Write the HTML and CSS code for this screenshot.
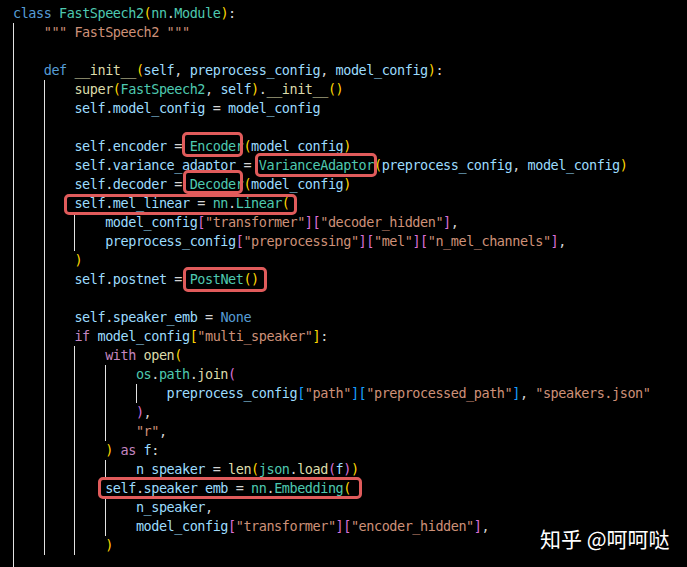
FILE: index.html
```html
<!DOCTYPE html>
<html lang="zh">
<head>
<meta charset="utf-8">
<title>FastSpeech2</title>
<link rel="stylesheet" href="styles.css">
</head>
<body>
<div class="editor">
<div class="ln"><span class="k">class</span> <span class="t">FastSpeech2</span><span class="y">(</span><span class="t">nn</span>.<span class="t">Module</span><span class="y">)</span>:</div>
<div class="ln"><span class="g">    </span><span class="s">""" FastSpeech2 """</span></div>
<div class="ln"><span class="g">    </span></div>
<div class="ln"><span class="g">    </span><span class="k">def</span> <span class="f">__init__</span><span class="y">(</span><span class="v">self</span>, <span class="v">preprocess_config</span>, <span class="v">model_config</span><span class="y">)</span>:</div>
<div class="ln"><span class="g">    </span><span class="g">    </span><span class="f">super</span><span class="y">(</span><span class="t">FastSpeech2</span>, <span class="v">self</span><span class="y">)</span>.<span class="f">__init__</span><span class="y">()</span></div>
<div class="ln"><span class="g">    </span><span class="g">    </span><span class="v">self</span>.<span class="v">model_config</span> = <span class="v">model_config</span></div>
<div class="ln"><span class="g">    </span><span class="g">    </span></div>
<div class="ln"><span class="g">    </span><span class="g">    </span><span class="v">self</span>.<span class="v">encoder</span> = <span class="t">Encoder</span><span class="y">(</span><span class="v">model_config</span><span class="y">)</span></div>
<div class="ln"><span class="g">    </span><span class="g">    </span><span class="v">self</span>.<span class="v">variance_adaptor</span> = <span class="t">VarianceAdaptor</span><span class="y">(</span><span class="v">preprocess_config</span>, <span class="v">model_config</span><span class="y">)</span></div>
<div class="ln"><span class="g">    </span><span class="g">    </span><span class="v">self</span>.<span class="v">decoder</span> = <span class="t">Decoder</span><span class="y">(</span><span class="v">model_config</span><span class="y">)</span></div>
<div class="ln"><span class="g">    </span><span class="g">    </span><span class="v">self</span>.<span class="v">mel_linear</span> = <span class="t">nn</span>.<span class="t">Linear</span><span class="y">(</span></div>
<div class="ln"><span class="g">    </span><span class="g">    </span><span class="g">    </span><span class="v">model_config</span><span class="p">[</span><span class="s">"transformer"</span><span class="p">][</span><span class="s">"decoder_hidden"</span><span class="p">]</span>,</div>
<div class="ln"><span class="g">    </span><span class="g">    </span><span class="g">    </span><span class="v">preprocess_config</span><span class="p">[</span><span class="s">"preprocessing"</span><span class="p">][</span><span class="s">"mel"</span><span class="p">][</span><span class="s">"n_mel_channels"</span><span class="p">]</span>,</div>
<div class="ln"><span class="g">    </span><span class="g">    </span><span class="y">)</span></div>
<div class="ln"><span class="g">    </span><span class="g">    </span><span class="v">self</span>.<span class="v">postnet</span> = <span class="t">PostNet</span><span class="y">()</span></div>
<div class="ln"><span class="g">    </span><span class="g">    </span></div>
<div class="ln"><span class="g">    </span><span class="g">    </span><span class="v">self</span>.<span class="v">speaker_emb</span> = <span class="k">None</span></div>
<div class="ln"><span class="g">    </span><span class="g">    </span><span class="c">if</span> <span class="v">model_config</span><span class="y">[</span><span class="s">"multi_speaker"</span><span class="y">]</span>:</div>
<div class="ln"><span class="g">    </span><span class="g">    </span><span class="g">    </span><span class="c">with</span> <span class="f">open</span><span class="y">(</span></div>
<div class="ln"><span class="g">    </span><span class="g">    </span><span class="g">    </span><span class="g">    </span><span class="t">os</span>.<span class="t">path</span>.<span class="f">join</span><span class="p">(</span></div>
<div class="ln"><span class="g">    </span><span class="g">    </span><span class="g">    </span><span class="g">    </span><span class="g">    </span><span class="v">preprocess_config</span><span class="b">[</span><span class="s">"path"</span><span class="b">][</span><span class="s">"preprocessed_path"</span><span class="b">]</span>, <span class="s">"speakers.json"</span></div>
<div class="ln"><span class="g">    </span><span class="g">    </span><span class="g">    </span><span class="g">    </span><span class="p">)</span>,</div>
<div class="ln"><span class="g">    </span><span class="g">    </span><span class="g">    </span><span class="g">    </span><span class="s">"r"</span>,</div>
<div class="ln"><span class="g">    </span><span class="g">    </span><span class="g">    </span><span class="y">)</span> <span class="c">as</span> <span class="v">f</span>:</div>
<div class="ln"><span class="g">    </span><span class="g">    </span><span class="g">    </span><span class="g">    </span><span class="v">n_speaker</span> = <span class="f">len</span><span class="y">(</span><span class="t">json</span>.<span class="f">load</span><span class="p">(</span><span class="v">f</span><span class="p">)</span><span class="y">)</span></div>
<div class="ln"><span class="g">    </span><span class="g">    </span><span class="g">    </span><span class="v">self</span>.<span class="v">speaker_emb</span> = <span class="t">nn</span>.<span class="t">Embedding</span><span class="y">(</span></div>
<div class="ln"><span class="g">    </span><span class="g">    </span><span class="g">    </span><span class="g">    </span><span class="v">n_speaker</span>,</div>
<div class="ln"><span class="g">    </span><span class="g">    </span><span class="g">    </span><span class="g">    </span><span class="v">model_config</span><span class="p">[</span><span class="s">"transformer"</span><span class="p">][</span><span class="s">"encoder_hidden"</span><span class="p">]</span>,</div>
<div class="ln"><span class="g">    </span><span class="g">    </span><span class="g">    </span><span class="y">)</span></div>
<div class="ln"><span class="g">    </span></div>
<div class="mark m-encoder"></div>
<div class="mark m-variance"></div>
<div class="mark m-decoder"></div>
<div class="mark m-mel"></div>
<div class="mark m-postnet"></div>
<div class="mark m-speaker"></div>
<div class="watermark">知乎 @呵呵哒</div>
</div>
</body>
</html>
```

FILE: styles.css
```css
html, body {
  margin: 0;
  padding: 0;
  background: #000;
}

.editor {
  position: relative;
  width: 687px;
  height: 567px;
  box-sizing: border-box;
  overflow: hidden;
  padding: 4px 0 0 13px;
  background: #000;
  color: #d4d4d4;
  font-family: "DejaVu Sans Mono", "Liberation Mono", monospace;
  font-size: 13.5px;
  letter-spacing: -0.448px;
  line-height: 19px;
}

.ln {
  height: 19px;
  white-space: pre;
}

.g {
  display: inline-block;
  height: 19px;
  vertical-align: top;
  background: linear-gradient(#e2e2e2, #e2e2e2) 0 0 / 1px 100% no-repeat;
}

.k { color: #569cd6; }
.c { color: #c586c0; }
.t { color: #4ec9b0; }
.f { color: #dcdcaa; }
.v { color: #9cdcfe; }
.s { color: #ce9178; }
.y { color: #ffd700; }
.p { color: #da70d6; }
.b { color: #179fff; }

.mark {
  position: absolute;
  box-sizing: border-box;
  border: 3px solid #e05b5b;
  border-radius: 5px;
}

.m-encoder { left: 182px; top: 132px; width: 61px; height: 25px; }
.m-variance { left: 255px; top: 153px; width: 122px; height: 24px; }
.m-decoder { left: 183px; top: 170px; width: 60px; height: 24px; }
.m-mel { left: 64px; top: 194px; width: 233px; height: 21px; }
.m-postnet { left: 183px; top: 267px; width: 84px; height: 25px; }
.m-speaker { left: 98px; top: 477px; width: 264px; height: 22px; }

.watermark {
  position: absolute;
  left: 540px;
  top: 527px;
  color: #fff;
  font-family: "Noto Sans CJK SC", sans-serif;
  font-size: 21px;
  line-height: 23px;
  letter-spacing: 0;
  white-space: nowrap;
  text-shadow: 0 0 2px rgba(0, 0, 0, 0.6);
}
```
